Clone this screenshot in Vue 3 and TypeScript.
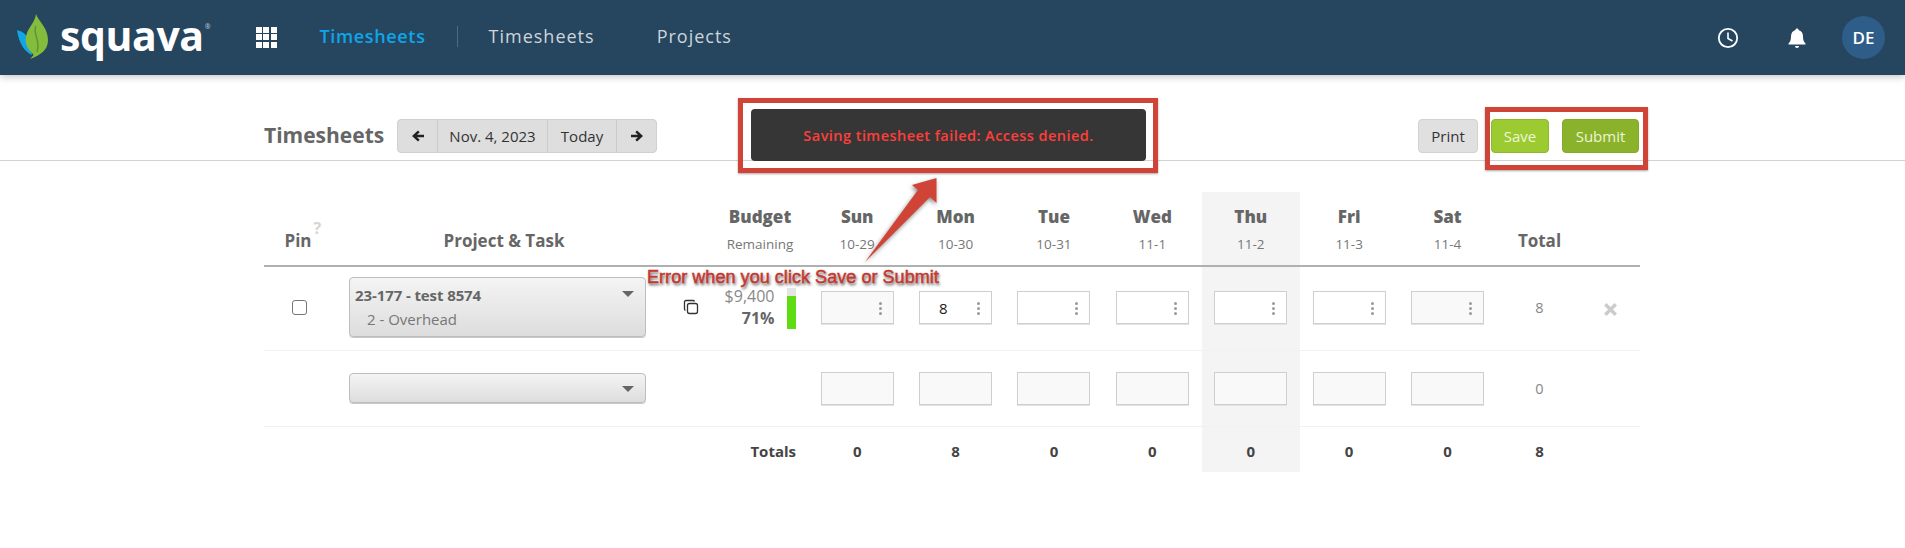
<script setup lang="ts">
interface Day { name: string; date: string; total: number; today?: boolean }
const days: Day[] = [
  { name: 'Sun', date: '10-29', total: 0 },
  { name: 'Mon', date: '10-30', total: 8 },
  { name: 'Tue', date: '10-31', total: 0 },
  { name: 'Wed', date: '11-1', total: 0 },
  { name: 'Thu', date: '11-2', total: 0, today: true },
  { name: 'Fri', date: '11-3', total: 0 },
  { name: 'Sat', date: '11-4', total: 0 },
]
const weekend = (d: Day) => d.name === 'Sun' || d.name === 'Sat'
</script>

<template>
  <div class="app">
    <header class="topbar">
      <div class="brand">
        <svg class="leaf" width="34" height="46" viewBox="0 0 34 46">
          <path d="M0 16 C5 17 9 20 12 25 L15 41 C8 38 2 30 0 16Z" fill="#12a5e6" />
          <path d="M19 0 C22 8 31 14 31 26 C31 36 24 41 13 45 C16 42 17 41 16 40 C9 34 7 27 10 19 C12 13 18 8 19 0Z" fill="#84bc3c" />
          <path d="M19 12 C15 20 24 25 20 38" fill="none" stroke="#5d9335" stroke-width="1.4" />
        </svg>
        <span class="wordmark">squava</span><span class="reg">®</span>
      </div>
      <div class="apps">
        <i v-for="n in 9" :key="n"></i>
      </div>
      <nav class="nav">
        <a class="active">Timesheets</a>
        <span class="sep"></span>
        <a>Timesheets</a>
        <a class="projects">Projects</a>
      </nav>
      <div class="right">
        <svg width="22" height="22" viewBox="0 0 22 22" fill="none" stroke="#fff">
          <circle cx="11" cy="11" r="9.2" stroke-width="1.8" />
          <path d="M11 5.5V11.5L15.5 14" stroke-width="1.6" />
        </svg>
        <svg class="bell" width="18" height="22" viewBox="0 0 18 22" fill="#fff">
          <path d="M9 1.5c1 0 1.5.6 1.5 1.4C13.500 3.700 15 6.200 15 9.500c0 4 1 5.500 2.500 7v1H.5v-1C2 15 3 13.500 3 9.500c0-3.300 1.500-5.800 4.500-6.600C7.500 2.100 8 1.500 9 1.500Z" />
          <path d="M7 19h4a2 2 0 0 1-4 0Z" />
        </svg>
        <div class="avatar">DE</div>
      </div>
    </header>

    <section class="toolbar">
      <h1>Timesheets</h1>
      <div class="datebar">
        <button class="seg arrow">
          <svg width="14" height="14" viewBox="0 0 14 14" fill="#222"><path d="M7 1.500 8.700 3.200 6 5.700H13V8.300H6L8.700 10.800 7 12.500 1 7Z" /></svg>
        </button>
        <button class="seg date">Nov. 4, 2023</button>
        <button class="seg today-btn">Today</button>
        <button class="seg arrow last">
          <svg width="14" height="14" viewBox="0 0 14 14" fill="#222"><path d="M7 1.500 5.300 3.200 8 5.700H1V8.300H8L5.300 10.800 7 12.500 13 7Z" /></svg>
        </button>
      </div>
      <div class="error">Saving timesheet failed: Access denied.</div>
      <div class="actions">
        <button class="btn print">Print</button>
        <button class="btn save">Save</button>
        <button class="btn submit">Submit</button>
      </div>
    </section>

    <section class="sheet">
      <div class="row head">
        <div class="cell pin-h"><span class="pin-label">Pin<sup>?</sup></span></div>
        <div class="cell project-h">Project &amp; Task</div>
        <div></div>
        <div class="cell budget-h"><b>Budget</b><small>Remaining</small></div>
        <div v-for="d in days" :key="d.name" class="cell day-h" :class="{ today: d.today }">
          <b>{{ d.name }}</b><small>{{ d.date }}</small>
        </div>
        <div class="cell total-h">Total</div>
        <div></div>
      </div>

      <div class="row line1">
        <div class="cell"><span class="check"></span></div>
        <div class="cell sel-cell">
          <div class="select tall">
            <strong>23-177 - test 8574</strong>
            <span>2 - Overhead</span>
            <em class="caret"></em>
          </div>
        </div>
        <div class="cell copy">
          <svg width="16" height="16" viewBox="0 0 16 16" fill="none" stroke="#333" stroke-width="1.300">
            <rect x="4.500" y="4.500" width="10" height="10" rx="2" />
            <path d="M2.500 11.500C1.700 11.200 1.500 10.700 1.500 10V3C1.500 2 2 1.500 3 1.500H10C10.700 1.500 11.200 1.800 11.500 2.500" />
          </svg>
        </div>
        <div class="cell budget">
          <div class="amounts"><span>$9,400</span><b>71%</b></div>
          <div class="bar"><i></i></div>
        </div>
        <div v-for="d in days" :key="d.name" class="cell" :class="{ today: d.today }">
          <div class="hours" :class="{ shaded: weekend(d) }">
            <span v-if="d.name === 'Mon'" class="val">8</span>
            <span class="kebab"><i></i><i></i><i></i></span>
          </div>
        </div>
        <div class="cell num">8</div>
        <div class="cell remove">
          <svg width="15" height="15" viewBox="0 0 15 15" fill="#ccc"><path d="M3.500 1 7.500 5 11.500 1 14 3.500 10 7.500 14 11.500 11.500 14 7.500 10 3.500 14 1 11.500 5 7.500 1 3.500Z" /></svg>
        </div>
      </div>

      <div class="row line2">
        <div class="cell"></div>
        <div class="cell sel-cell">
          <div class="select short"><em class="caret"></em></div>
        </div>
        <div></div>
        <div></div>
        <div v-for="d in days" :key="d.name" class="cell" :class="{ today: d.today }">
          <div class="hours shaded"></div>
        </div>
        <div class="cell num">0</div>
        <div></div>
      </div>

      <div class="row foot">
        <div></div>
        <div></div>
        <div></div>
        <div class="cell totals-l">Totals</div>
        <div v-for="d in days" :key="d.name" class="cell tot" :class="{ today: d.today }">{{ d.total }}</div>
        <div class="cell tot">8</div>
        <div></div>
      </div>
    </section>

    <div class="mark mark-error"></div>
    <div class="mark mark-buttons"></div>
    <svg class="callout-arrow" width="90" height="100" viewBox="860 170 90 100">
      <path d="M865 262 L918 190 L912 185 L936.500 178 L936.500 203 L930 197 Z" fill="#cf4436" />
    </svg>
    <div class="callout-text">Error when you click Save or Submit</div>
  </div>
</template>

<style>
body { margin: 0; background: #fff; }
</style>

<style scoped>
.app {
  position: relative;
  width: 1905px;
  height: 548px;
  overflow: hidden;
  font-family: "Open Sans", "Liberation Sans", sans-serif;
  color: #666;
}
.topbar {
  height: 75px;
  background: #26455f;
  box-shadow: 0 1px 8px rgba(0, 0, 0, .28);
  display: flex;
  align-items: center;
  position: relative;
  box-sizing: border-box;
  padding-left: 17px;
}
.brand { display: flex; align-items: center; width: 238.500px; height: 75px; flex: none; }
.leaf { flex: none; margin-top: -2px; }
.wordmark {
  color: #fff;
  font: 700 41px/1 "Open Sans", sans-serif;
  margin-left: 9px;
  margin-top: -5px;
  letter-spacing: -.4px;
}
.reg { color: #c5ced6; font-size: 7px; align-self: flex-start; margin-top: 22px; margin-left: 1px; }
.apps {
  display: grid;
  grid-template-columns: repeat(3, 6px);
  grid-auto-rows: 6px;
  gap: 1.500px;
  flex: none;
  margin-top: -1px;
}
.apps i { background: #fff; }
.nav { display: flex; align-items: center; margin-left: 43px; margin-top: -3px; }
.nav a { font-size: 18px; letter-spacing: 1px; color: #ccd5dc; }
.nav a.active { color: #0ea5e9; font-weight: 600; letter-spacing: .65px; }
.sep { width: 1px; height: 21px; background: #4b6b85; margin: 0 31px; }
.nav a.projects { margin-left: 62px; }
.right { margin-left: auto; display: flex; align-items: center; margin-right: 20px; }
.bell { margin-left: 49px; }
.avatar {
  width: 43px;
  height: 43px;
  border-radius: 50%;
  background: #2d5d88;
  color: #fff;
  font-size: 17px;
  font-weight: 600;
  display: flex;
  align-items: center;
  justify-content: center;
  margin-left: 36px;
}

.toolbar {
  height: 85px;
  border-bottom: 1px solid #d2d2d2;
  display: flex;
  align-items: flex-start;
  padding-left: 264px;
}
.toolbar h1 {
  margin: 38px 0 0;
  font-size: 21px;
  line-height: 44px;
  font-weight: 700;
  color: #666;
  width: 133px;
}
.datebar {
  display: flex;
  margin-top: 44px;
  height: 34px;
  border: 1px solid #d0d0d0;
  border-radius: 4px;
  box-sizing: border-box;
  background: #dedede;
  overflow: hidden;
}
.seg {
  border: 0;
  border-right: 1px solid #cbcbcb;
  background: transparent;
  font: 400 15px "Open Sans", sans-serif;
  color: #333;
  padding: 0;
  display: flex;
  align-items: center;
  justify-content: center;
}
.arrow { width: 40px; }
.arrow.last { width: 39px; border-right: 0; }
.date { width: 110px; }
.today-btn { width: 69px; }
.error {
  margin: 34px 0 0 94px;
  width: 395px;
  height: 52px;
  background: #363636;
  border-radius: 4px;
  color: #ff3f3a;
  font-size: 14.500px;
  font-weight: 600;
  letter-spacing: .45px;
  display: flex;
  align-items: center;
  justify-content: center;
}
.actions { display: flex; margin: 44px 0 0 272px; }
.btn {
  height: 34px;
  border-radius: 4px;
  font: 400 15px "Open Sans", sans-serif;
  padding: 0;
  box-sizing: border-box;
}
.print { width: 60px; background: #e0e0e0; border: 1px solid #d2d2d2; color: #333; }
.save { width: 58px; margin-left: 13px; background: #9bcb30; border: 1px solid #8dbb2a; color: #eef5d8; }
.submit { width: 77px; margin-left: 13px; background: #8ab32b; border: 1px solid #82a927; color: #eef5d8; }

.sheet { margin: 31px 0 0 264px; width: 1376px; }
.row {
  display: grid;
  grid-template-columns: 70px 340px 34px 100px repeat(7, 98.400px) 85.500px 58px;
}
.cell { display: flex; align-items: center; justify-content: center; }
.cell.today { background: #f4f4f4; }
.head { height: 73px; border-bottom: 2px solid #b0b0b0; }
.head .cell { font-size: 17px; font-weight: 700; color: #666; }
.pin-h, .project-h, .total-h { align-items: flex-end !important; padding-bottom: 13px; line-height: 22px; }
.pin-label { position: relative; margin-left: -2px; }
.pin-label sup {
  position: absolute;
  left: 100%;
  top: -10px;
  margin-left: 2px;
  font-size: 16px;
  line-height: 16px;
  color: #d5d5d5;
}
.budget-h, .day-h { flex-direction: column; justify-content: flex-start !important; padding-top: 14px; }
.budget-h { padding-left: 4px; }
.head b { line-height: 22px; }
.head small { font-size: 13.500px; font-weight: 400; color: #777; line-height: 18px; margin-top: 7px; }
.line1 { height: 83px; border-bottom: 1px solid #f1f1f1; }
.line2 { height: 75px; border-bottom: 1px solid #f1f1f1; }
.foot { height: 45px; }
.check { width: 13px; height: 13px; border: 1px solid #767676; border-radius: 3px; background: #fff; margin-top: -3px; }
.sel-cell { justify-content: flex-start; padding-left: 15px; }
.select {
  position: relative;
  width: 297px;
  box-sizing: border-box;
  border: 1px solid #bdbdbd;
  border-radius: 4px;
  background: linear-gradient(#f4f4f4, #dddddd);
  box-shadow: 0 1px 0 #c9c9c9;
}
.select.tall {
  height: 60px;
  margin-top: -3px;
  padding: 7px 5px;
  display: flex;
  flex-direction: column;
}
.select.short { height: 30px; margin-top: -1px; }
.select strong { font-size: 15px; color: #666; line-height: 21px; font-weight: 700; letter-spacing: -.1px; }
.select span { font-size: 15px; color: #777; line-height: 21px; padding-left: 12px; margin-top: 3px; }
.caret {
  position: absolute;
  right: 11px;
  width: 0;
  height: 0;
  border-left: 6px solid transparent;
  border-right: 6px solid transparent;
  border-top: 6px solid #666;
  top: 12px;
}
.select.tall .caret { top: 13px; }
.copy { margin-top: -3px; }
.budget { justify-content: flex-end; gap: 12px; padding-right: 12.500px; margin-top: -3px; }
.amounts { display: flex; flex-direction: column; align-items: flex-end; font-size: 16px; line-height: 22px; color: #888; }
.amounts b { color: #666; font-weight: 700; }
.bar { width: 9px; height: 41px; background: #e4e4e4; position: relative; margin-top: 2px; }
.bar i { position: absolute; left: 0; right: 0; bottom: 0; height: 33px; background: #5fdc12; }
.hours {
  position: relative;
  width: 73px;
  height: 33px;
  box-sizing: border-box;
  border: 1px solid #cfcfcf;
  box-shadow: 0 1px 0 #e3e3e3;
  background: #fff;
  display: flex;
  align-items: center;
  margin-top: -2px;
}
.line2 .hours { margin-top: 0; }
.hours.shaded { background: #f9f9f9; }
.val { font-size: 15px; color: #222; margin-left: 19px; }
.kebab {
  position: absolute;
  right: 11px;
  top: 10px;
  display: flex;
  flex-direction: column;
  gap: 2px;
}
.kebab i { width: 3px; height: 3px; border-radius: 50%; background: #9a9a9a; }
.num { font-size: 14.500px; color: #888; }
.line1 .num { margin-top: -2px; }
.remove { margin-top: 1px; padding-right: 2px; }
.line2 .num { margin-top: 0; }
.totals-l { justify-content: flex-end; padding-right: 12px; }
.foot .cell { font-size: 15px; font-weight: 700; color: #444; padding-top: 2px; }

.mark {
  position: absolute;
  box-sizing: border-box;
  border: 5px solid #cf4436;
  box-shadow: 0 1px 2px rgba(0, 0, 0, .35);
  pointer-events: none;
}
.mark-error { left: 738px; top: 98px; width: 420px; height: 75px; }
.mark-buttons { left: 1485px; top: 107px; width: 163px; height: 63px; }
.callout-arrow {
  position: absolute;
  left: 860px;
  top: 170px;
  filter: drop-shadow(-1px 2px 2px rgba(0, 0, 0, .45));
}
.callout-text {
  position: absolute;
  left: 647px;
  top: 266px;
  font: 400 18px/22px "Liberation Sans", Arial, sans-serif;
  color: #cf3a30;
  white-space: nowrap;
  letter-spacing: .05px;
  -webkit-text-stroke: .5px #b92e26;
  text-shadow: 0 0 2px #fff, 1px 2px 3px rgba(0, 0, 0, .8);
}
</style>
